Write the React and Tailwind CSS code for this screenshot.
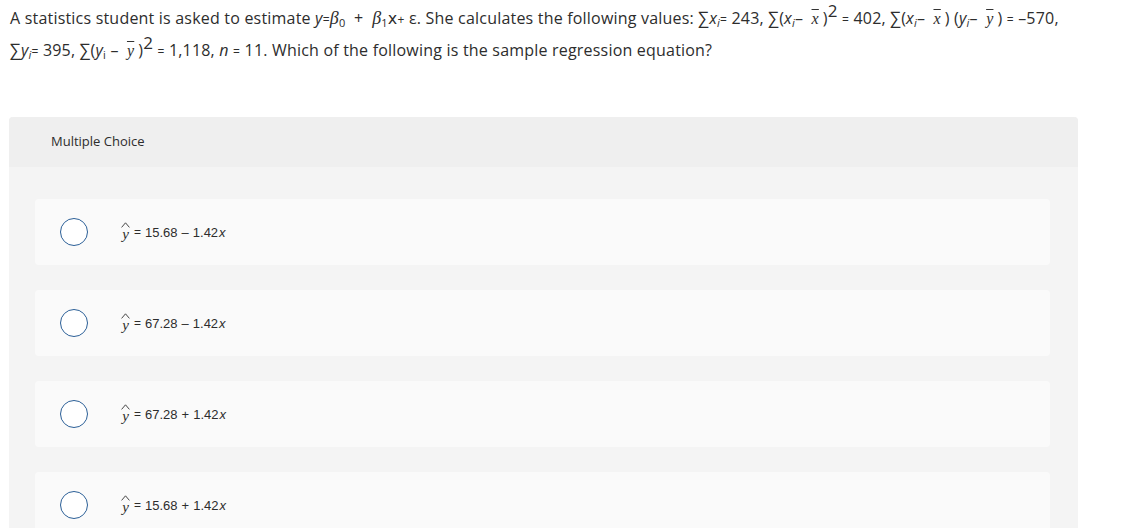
import React from "react";

function Sub({ children, italic }) {
  return (
    <sub className={`text-[11px] ${italic ? "italic" : ""}`}>{children}</sub>
  );
}

function Sup({ children }) {
  return <sup className="text-[17px] top-[-0.42em]">{children}</sup>;
}

function Bar({ children }) {
  return (
    <span className="italic font-[Liberation_Serif] mx-[4px] overline decoration-[#333]">{children}</span>
  );
}

function Eq() {
  return <span className="text-[12px]">=</span>;
}

function Hat() {
  return (
    <span className="inline-flex flex-col items-center font-[Liberation_Serif] mr-[2px]">
      <svg width="9" height="6" viewBox="0 0 9 6" className="mb-[-1px]">
        <polyline points="0.6,5.4 4.5,0.8 8.4,5.4" fill="none" stroke="#333" strokeWidth="0.9" />
      </svg>
      <span className="italic text-[15px] leading-none">y</span>
    </span>
  );
}

const options = [
  ["15.68", "–"],
  ["67.28", "–"],
  ["67.28", "+"],
  ["15.68", "+"],
];

export default function App() {
  return (
    <div className="bg-white min-h-screen text-[#2d2d2d] font-[Open_Sans]">
      <div className="px-[10px] pt-[3px] text-[16px] tracking-[0.2px] leading-[30px]">
        <p>
          A statistics student is asked to estimate <i>y</i>
          <Eq />
          <i className="text-[18px] font-[Liberation_Serif]">β</i>
          <Sub>0</Sub> &nbsp;+&nbsp; <i className="text-[18px] font-[Liberation_Serif]">β</i>
          <Sub>1</Sub>
          <span className="font-[DejaVu_Sans]">x</span>
          <span className="text-[12px]">+</span> ε. She calculates the following values:{" "}
          <span className="text-[17px]">∑</span>
          <i>x</i>
          <Sub italic>i</Sub>
          <Eq /> 243, <span className="text-[17px]">∑</span>(<i>x</i>
          <Sub italic>i</Sub>– <Bar>x</Bar>)<Sup>2</Sup> <Eq /> 402,{" "}
          <span className="text-[17px]">∑</span>(<i>x</i>
          <Sub italic>i</Sub>– <Bar>x</Bar>) (<i>y</i>
          <Sub italic>i</Sub>– <Bar>y</Bar>) <Eq /> –570,
          <br />
          <span className="text-[17px]">∑</span>
          <i>y</i>
          <Sub italic>i</Sub>
          <Eq /> 395, <span className="text-[17px]">∑</span>(<i>y</i>
          <Sub>i</Sub> – <Bar>y</Bar>)<Sup>2</Sup> <Eq /> 1,118, <i>n</i> <Eq /> 11. Which of the
          following is the sample regression equation?
        </p>
      </div>

      <div className="mt-[50px] ml-[9px] w-[1069px] rounded-t-[4px] bg-[#f4f4f4]">
        <div className="h-[50px] bg-[#efefef] rounded-t-[4px] pl-[42px] flex items-center text-[13px] text-[#2d2d2d]">
          Multiple Choice
        </div>
        <div className="pt-[32px] pl-[26px] pr-[28px] flex flex-col gap-[25px] pb-[20px]">
          {options.map(([a, sign], i) => (
            <div key={i} className="h-[66px] bg-[#fafafa] rounded-[4px] flex items-center pl-[25px]">
              <span className="w-[28px] h-[28px] rounded-full border-[1.5px] border-[#2b5f97] bg-white shrink-0" />
              <span className="ml-[33px] text-[13px] flex items-end font-[Liberation_Sans]">
                <Hat />
                <span className="flex items-center gap-[4px] ml-[2px]">
                  <Eq />
                  <span>{a}</span>
                  <span>{sign}</span>
                  <span>
                    1.42<i className="ml-[1px]">x</i>
                  </span>
                </span>
              </span>
            </div>
          ))}
        </div>
      </div>
    </div>
  );
}
